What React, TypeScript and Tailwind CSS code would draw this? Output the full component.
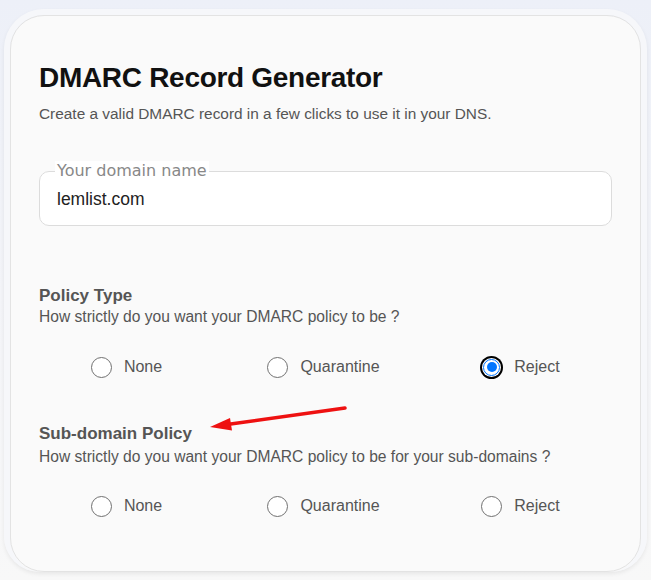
import React from 'react'

const FONT = { fontFamily: '"Liberation Sans", Arial, sans-serif' }

type RadioProps = { label: string; checked?: boolean }

function Radio({ label, checked }: RadioProps) {
  return (
    <label className="flex h-[24px] items-center justify-center gap-[12px] cursor-pointer">
      {checked ? (
        // checked + focused radio (black focus ring)
        <span className="-mx-[1px] flex h-[23px] w-[23px] items-center justify-center rounded-full bg-black">
          <span className="flex h-[19px] w-[19px] items-center justify-center rounded-full bg-white">
            <span className="flex h-[17px] w-[17px] items-center justify-center rounded-full border-[1.5px] border-[#0075ff] bg-white">
              <span className="h-[10px] w-[10px] rounded-full bg-[#0075ff]" />
            </span>
          </span>
        </span>
      ) : (
        <span className="h-[21px] w-[21px] rounded-full border-[1.5px] border-[#707070] bg-white" />
      )}
      <span className="text-[16px] leading-[24px] text-[#555]">{label}</span>
    </label>
  )
}

function RadioGroup({ selected }: { selected?: string }) {
  return (
    <div className="-ml-[11px] -mr-[7px] grid grid-cols-3">
      {['None', 'Quarantine', 'Reject'].map(o => (
        <Radio key={o} label={o} checked={o === selected} />
      ))}
    </div>
  )
}

export default function App() {
  return (
    <div className="min-h-[580px] w-full bg-gradient-to-b from-[#edf0f8] via-[#f3f4f8] to-[#f8f8f8] pt-[9px] pl-[4px] pr-[4px]" style={FONT}>
      <div className="rounded-t-[40px] rounded-b-[36px] border-[6px] border-b-0 border-[#f6f7fa] shadow-[0_2px_4px_rgba(0,0,0,0.07)]">
        <div className="relative h-[557px] rounded-[34px] border border-[#e3e3e3] bg-[#fafafa] px-[28px] pt-[45px]">
          <h1 className="text-[28px] font-bold leading-[34px] text-[#111] tracking-[-0.3px]">DMARC Record Generator</h1>
          <p className="mt-[9px] text-[15.4px] leading-[20px] text-[#555]">
            Create a valid DMARC record in a few clicks to use it in your DNS.
          </p>

          <fieldset className="mt-[37px] rounded-[10px] border border-[#dcdcdc] bg-white px-[17px] pb-[16px]">
            <legend
              className="-ml-[2px] bg-white px-[2px] text-[16px] leading-[20px] text-[#888]"
              style={{ fontFamily: '"DejaVu Sans", sans-serif' }}
            >
              Your domain name
            </legend>
            <div className="pt-[8px] text-[17.5px] leading-[20px] text-[#222]">lemlist.com</div>
          </fieldset>

          <h2 className="mt-[59px] text-[17px] font-bold leading-[22px] text-[#555]">Policy Type</h2>
          <p className="text-[15.6px] leading-[20px] text-[#555]">How strictly do you want your DMARC policy to be ?</p>
          <div className="mt-[28px]">
            <RadioGroup selected="Reject" />
          </div>

          <h2 className="mt-[44px] text-[17px] font-bold leading-[22px] text-[#555]">Sub-domain Policy</h2>
          <p className="mt-[2px] text-[15.6px] leading-[20px] text-[#555]">
            How strictly do you want your DMARC policy to be for your sub-domains ?
          </p>
          <div className="mt-[27px]">
            <RadioGroup />
          </div>

          {/* annotation arrow */}
          <svg className="pointer-events-none absolute left-[180px] top-[381px]" width="170" height="50" viewBox="0 0 170 50">
            <line x1="154" y1="11" x2="36" y2="27.5" stroke="#ee1111" strokeWidth="3.5" strokeLinecap="round" />
            <polygon points="19,30 39,21 41,33.5" fill="#ee1111" />
          </svg>
        </div>
      </div>
    </div>
  )
}
